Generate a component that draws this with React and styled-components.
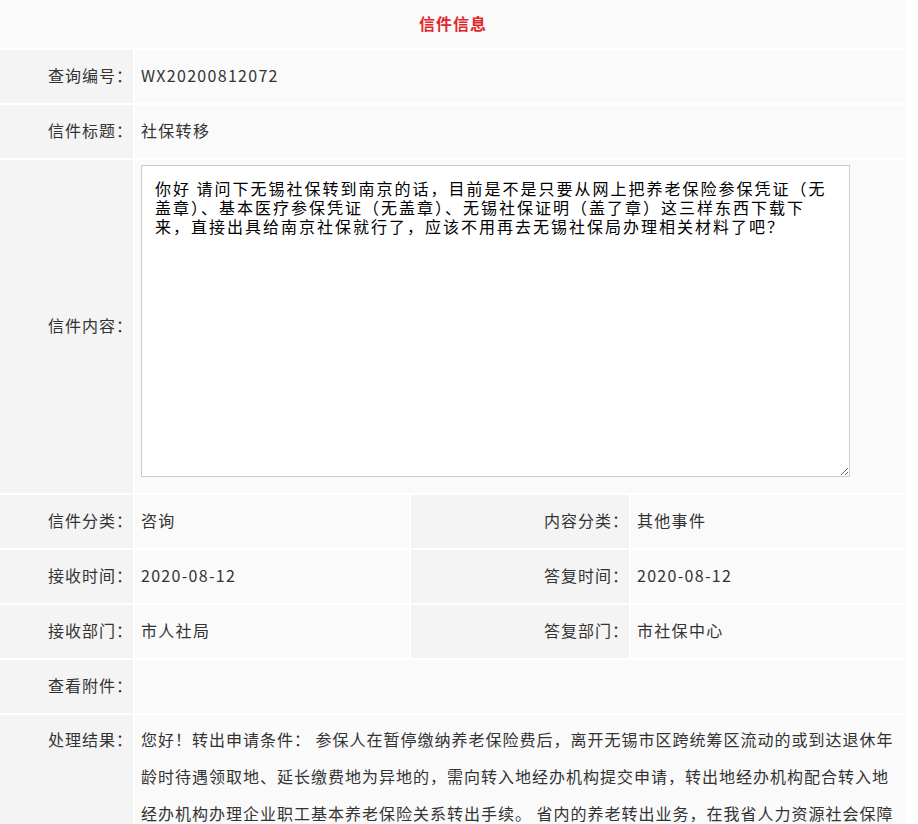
import styled, { createGlobalStyle } from "styled-components";

const GlobalStyle = createGlobalStyle`
    html, body {
        margin: 0;
        padding: 0;
        background: #ffffff;
    }
    body {
        font-family: "Noto Sans CJK SC", "Noto Sans", sans-serif;
        color: #333333;
    }
`;

const letter = {
    id: "WX20200812072",
    title: "社保转移",
    content:
        "你好 请问下无锡社保转到南京的话，目前是不是只要从网上把养老保险参保凭证（无盖章）、基本医疗参保凭证（无盖章）、无锡社保证明（盖了章）这三样东西下载下来，直接出具给南京社保就行了，应该不用再去无锡社保局办理相关材料了吧？",
    type: "咨询",
    category: "其他事件",
    received: "2020-08-12",
    replied: "2020-08-12",
    receiver: "市人社局",
    replier: "市社保中心",
    result:
        "您好！转出申请条件： 参保人在暂停缴纳养老保险费后，离开无锡市区跨统筹区流动的或到达退休年龄时待遇领取地、延长缴费地为异地的，需向转入地经办机构提交申请，转出地经办机构配合转入地经办机构办理企业职工基本养老保险关系转出手续。 省内的养老转出业务，在我省人力资源社会保障网上办事大厅可以直接办理，无需到窗口提交材料。",
};

export default function App() {
    return (
        <>
            <GlobalStyle />
            <StyledTable>
                <StyledTitle>信件信息</StyledTitle>

                <StyledLabel>查询编号：</StyledLabel>
                <StyledValue span={3}>{letter.id}</StyledValue>

                <StyledLabel>信件标题：</StyledLabel>
                <StyledValue span={3}>{letter.title}</StyledValue>

                <StyledLabel>信件内容：</StyledLabel>
                <StyledValue span={3} tall>
                    <StyledTextArea defaultValue={letter.content} />
                </StyledValue>

                <StyledLabel>信件分类：</StyledLabel>
                <StyledValue>{letter.type}</StyledValue>
                <StyledLabel>内容分类：</StyledLabel>
                <StyledValue>{letter.category}</StyledValue>

                <StyledLabel>接收时间：</StyledLabel>
                <StyledValue>{letter.received}</StyledValue>
                <StyledLabel>答复时间：</StyledLabel>
                <StyledValue>{letter.replied}</StyledValue>

                <StyledLabel>接收部门：</StyledLabel>
                <StyledValue>{letter.receiver}</StyledValue>
                <StyledLabel>答复部门：</StyledLabel>
                <StyledValue>{letter.replier}</StyledValue>

                <StyledLabel>查看附件：</StyledLabel>
                <StyledValue span={3}></StyledValue>

                <StyledLabel top>处理结果：</StyledLabel>
                <StyledValue span={3} top>
                    {letter.result}
                </StyledValue>
            </StyledTable>
        </>
    );
}

const StyledTable = styled.div`
    width: 906px;
    display: grid;
    grid-template-columns: 133px 274px 218px 1fr;
    grid-template-rows: 48px;
    grid-auto-rows: minmax(53px, auto);
    gap: 2px;
    background-color: #ffffff;
`;

const StyledTitle = styled.div`
    grid-column: 1 / -1;
    display: flex;
    align-items: center;
    justify-content: center;
    padding-bottom: 2px;
    background-color: #fafafa;
    color: #e0282a;
    font-weight: 700;
    font-size: 16px;
    letter-spacing: 1px;
`;

const StyledLabel = styled.div`
    display: flex;
    align-items: ${(p) => (p.top ? "flex-start" : "center")};
    justify-content: flex-end;
    padding: ${(p) => (p.top ? "6px 0 0 0" : "0 0 3px 0")};
    line-height: ${(p) => (p.top ? "37px" : "normal")};
    background-color: #f4f4f4;
    font-size: 16px;
    letter-spacing: 1px;
    color: #333333;
`;

const StyledValue = styled.div`
    grid-column: span ${(p) => p.span || 1};
    display: ${(p) => (p.top ? "block" : "flex")};
    align-items: center;
    padding: ${(p) =>
        p.tall ? "5px 6px 16px 6px" : p.top ? "6px 6px 0 6px" : "0 6px 3px 6px"};
    line-height: ${(p) => (p.top ? "37px" : "normal")};
    background-color: #fafafa;
    font-size: 16px;
    letter-spacing: ${(p) => (p.top ? "1px" : "1.3px")};
    color: #333333;
`;

const StyledTextArea = styled.textarea`
    box-sizing: border-box;
    width: 709px;
    height: 312px;
    padding: 13px 12px 12px 13px;
    margin: 0;
    border: 1px solid #cccccc;
    background-color: #ffffff;
    font-family: "Noto Sans CJK SC", sans-serif;
    font-size: 16px;
    line-height: 19px;
    letter-spacing: 2px;
    color: #000000;
    outline: none;
    resize: both;
`;
